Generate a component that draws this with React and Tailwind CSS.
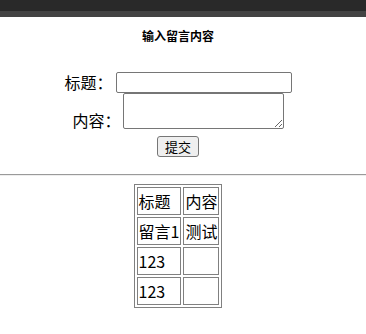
export default function App() {
  const font = { fontFamily: '"Noto Sans CJK SC", "Noto Sans", sans-serif' };
  return (
    <div className="w-[366px] h-[334px] bg-white text-black overflow-hidden" style={font}>
      <div className="h-[11px] bg-[#292929]" />
      <div className="h-[6px] bg-[#434343]" />
      <div className="w-[356px]">
        <div className="h-[27px] flex items-end justify-center text-[12px] font-bold leading-[16px]">输入留言内容</div>
        <div className="h-[27px]" />
        <div className="flex items-end justify-center text-[16px] leading-[22px]">
          <span className="mr-[3px]">标题：</span>
          <input className="w-[176px] h-[21px] border border-[#767676] rounded-[2px] bg-white" />
        </div>
        <div className="flex items-end justify-center text-[16px] leading-[22px]">
          <span className="mr-[2px] mb-[-2px]">内容：</span>
          <textarea className="w-[161px] h-[36px] border border-[#767676] rounded-[2px] bg-white" />
        </div>
        <div className="flex justify-center mt-[7px]">
          <button className="w-[42px] h-[21px] border border-[#767676] rounded-[3px] bg-[#efefef] text-[13px] leading-[17px] flex items-center justify-center">提交</button>
        </div>
      </div>
      <div className="mt-[17px] h-[2px] border-t border-[#9a9a9a] border-b border-b-[#eeeeee]" />
      <div className="w-[356px] flex justify-center mt-[8px]">
        <table className="border-separate border-spacing-[2px] border border-[#808080] text-[16px] leading-[24px]">
          <tbody>
            <tr>
              <td className="border border-[#808080] p-[1px]">标题</td>
              <td className="border border-[#808080] p-[1px]">内容</td>
            </tr>
            <tr>
              <td className="border border-[#808080] p-[1px]">留言1</td>
              <td className="border border-[#808080] p-[1px]">测试</td>
            </tr>
            <tr>
              <td className="border border-[#808080] p-[1px]">123</td>
              <td className="border border-[#808080] p-[1px]"></td>
            </tr>
            <tr>
              <td className="border border-[#808080] p-[1px]">123</td>
              <td className="border border-[#808080] p-[1px]"></td>
            </tr>
          </tbody>
        </table>
      </div>
    </div>
  );
}
